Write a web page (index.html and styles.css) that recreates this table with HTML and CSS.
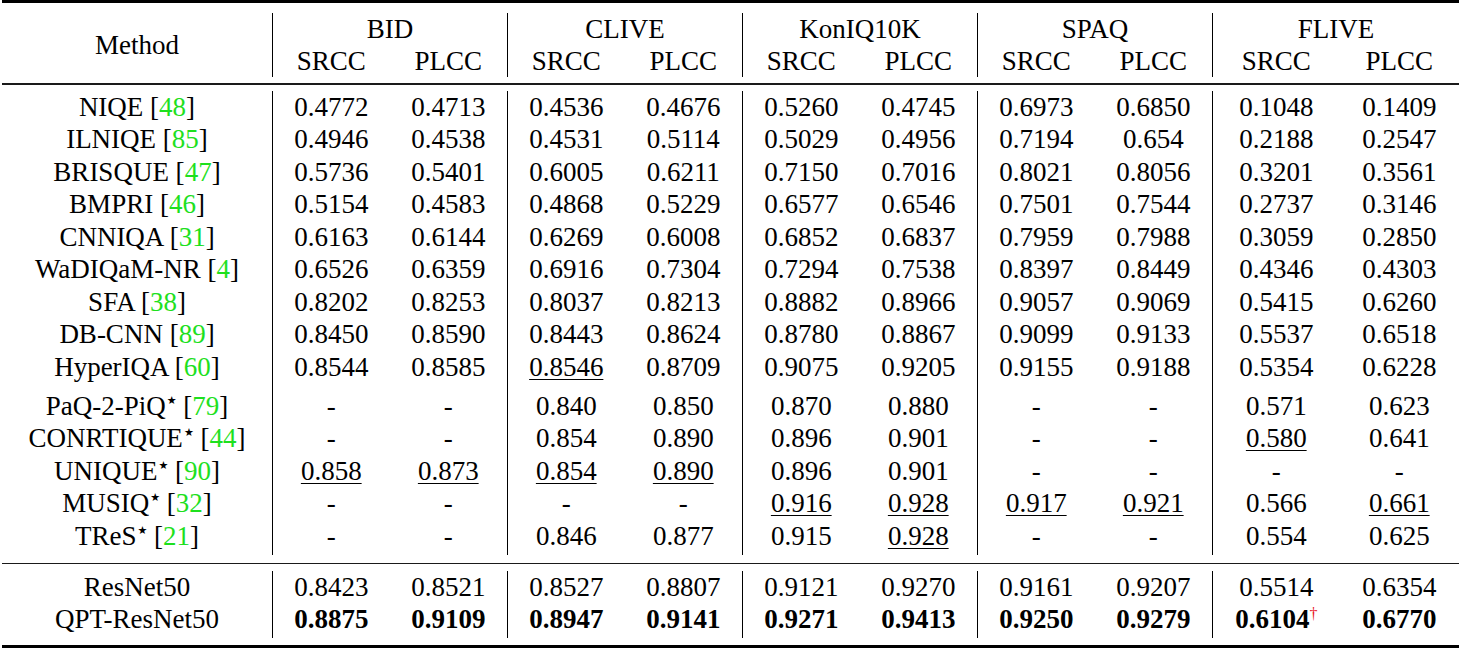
FILE: index.html
```html
<!DOCTYPE html>
<html lang="en">
<head>
<meta charset="utf-8">
<title>IQA results</title>
<link rel="stylesheet" href="styles.css">
</head>
<body>
<div class="wrap">
<table class="res">
  <colgroup>
    <col class="cm">
    <col class="cn"><col class="cn">
    <col class="cn"><col class="cn">
    <col class="cn"><col class="cn">
    <col class="cn"><col class="cn">
    <col class="cw"><col class="cl">
  </colgroup>
  <tbody>
    <tr class="rule thick"><td colspan="11"></td></tr>
    <tr class="gap g10"><td colspan="11"></td></tr>
    <tr class="hdr">
      <td rowspan="2">Method</td>
      <td colspan="2" class="sep">BID</td>
      <td colspan="2" class="sep">CLIVE</td>
      <td colspan="2" class="sep">KonIQ10K</td>
      <td colspan="2" class="sep">SPAQ</td>
      <td colspan="2" class="sep">FLIVE</td>
    </tr>
    <tr class="hdr">
      <td class="sep">SRCC</td><td>PLCC</td>
      <td class="sep">SRCC</td><td>PLCC</td>
      <td class="sep">SRCC</td><td>PLCC</td>
      <td class="sep">SRCC</td><td>PLCC</td>
      <td class="sep">SRCC</td><td>PLCC</td>
    </tr>
    <tr class="gap g6"><td colspan="11"></td></tr>
    <tr class="rule thin"><td colspan="11"></td></tr>
    <tr class="gap g6b"><td colspan="11"></td></tr>

    <tr class="row"><td>NIQE [<span class="cite">48</span>]</td><td class="sep">0.4772</td><td>0.4713</td><td class="sep">0.4536</td><td>0.4676</td><td class="sep">0.5260</td><td>0.4745</td><td class="sep">0.6973</td><td>0.6850</td><td class="sep">0.1048</td><td>0.1409</td></tr>
    <tr class="row"><td>ILNIQE [<span class="cite">85</span>]</td><td class="sep">0.4946</td><td>0.4538</td><td class="sep">0.4531</td><td>0.5114</td><td class="sep">0.5029</td><td>0.4956</td><td class="sep">0.7194</td><td>0.654</td><td class="sep">0.2188</td><td>0.2547</td></tr>
    <tr class="row"><td>BRISQUE [<span class="cite">47</span>]</td><td class="sep">0.5736</td><td>0.5401</td><td class="sep">0.6005</td><td>0.6211</td><td class="sep">0.7150</td><td>0.7016</td><td class="sep">0.8021</td><td>0.8056</td><td class="sep">0.3201</td><td>0.3561</td></tr>
    <tr class="row"><td>BMPRI [<span class="cite">46</span>]</td><td class="sep">0.5154</td><td>0.4583</td><td class="sep">0.4868</td><td>0.5229</td><td class="sep">0.6577</td><td>0.6546</td><td class="sep">0.7501</td><td>0.7544</td><td class="sep">0.2737</td><td>0.3146</td></tr>
    <tr class="row"><td>CNNIQA [<span class="cite">31</span>]</td><td class="sep">0.6163</td><td>0.6144</td><td class="sep">0.6269</td><td>0.6008</td><td class="sep">0.6852</td><td>0.6837</td><td class="sep">0.7959</td><td>0.7988</td><td class="sep">0.3059</td><td>0.2850</td></tr>
    <tr class="row"><td>WaDIQaM-NR [<span class="cite">4</span>]</td><td class="sep">0.6526</td><td>0.6359</td><td class="sep">0.6916</td><td>0.7304</td><td class="sep">0.7294</td><td>0.7538</td><td class="sep">0.8397</td><td>0.8449</td><td class="sep">0.4346</td><td>0.4303</td></tr>
    <tr class="row"><td>SFA [<span class="cite">38</span>]</td><td class="sep">0.8202</td><td>0.8253</td><td class="sep">0.8037</td><td>0.8213</td><td class="sep">0.8882</td><td>0.8966</td><td class="sep">0.9057</td><td>0.9069</td><td class="sep">0.5415</td><td>0.6260</td></tr>
    <tr class="row"><td>DB-CNN [<span class="cite">89</span>]</td><td class="sep">0.8450</td><td>0.8590</td><td class="sep">0.8443</td><td>0.8624</td><td class="sep">0.8780</td><td>0.8867</td><td class="sep">0.9099</td><td>0.9133</td><td class="sep">0.5537</td><td>0.6518</td></tr>
    <tr class="row tall"><td>HyperIQA [<span class="cite">60</span>]</td><td class="sep">0.8544</td><td>0.8585</td><td class="sep"><span class="u">0.8546</span></td><td>0.8709</td><td class="sep">0.9075</td><td>0.9205</td><td class="sep">0.9155</td><td>0.9188</td><td class="sep">0.5354</td><td>0.6228</td></tr>
    <tr class="row r2"><td>PaQ-2-PiQ<span class="star">★</span> [<span class="cite">79</span>]</td><td class="sep">-</td><td>-</td><td class="sep">0.840</td><td>0.850</td><td class="sep">0.870</td><td>0.880</td><td class="sep">-</td><td>-</td><td class="sep">0.571</td><td>0.623</td></tr>
    <tr class="row r2"><td>CONRTIQUE<span class="star">★</span> [<span class="cite">44</span>]</td><td class="sep">-</td><td>-</td><td class="sep">0.854</td><td>0.890</td><td class="sep">0.896</td><td>0.901</td><td class="sep">-</td><td>-</td><td class="sep"><span class="u">0.580</span></td><td>0.641</td></tr>
    <tr class="row r2"><td>UNIQUE<span class="star">★</span> [<span class="cite">90</span>]</td><td class="sep"><span class="u">0.858</span></td><td><span class="u">0.873</span></td><td class="sep"><span class="u">0.854</span></td><td><span class="u">0.890</span></td><td class="sep">0.896</td><td>0.901</td><td class="sep">-</td><td>-</td><td class="sep">-</td><td>-</td></tr>
    <tr class="row r2"><td>MUSIQ<span class="star">★</span> [<span class="cite">32</span>]</td><td class="sep">-</td><td>-</td><td class="sep">-</td><td>-</td><td class="sep"><span class="u">0.916</span></td><td><span class="u">0.928</span></td><td class="sep"><span class="u">0.917</span></td><td><span class="u">0.921</span></td><td class="sep">0.566</td><td><span class="u">0.661</span></td></tr>
    <tr class="row r2 last"><td>TReS<span class="star">★</span> [<span class="cite">21</span>]</td><td class="sep">-</td><td>-</td><td class="sep">0.846</td><td>0.877</td><td class="sep">0.915</td><td><span class="u">0.928</span></td><td class="sep">-</td><td>-</td><td class="sep">0.554</td><td>0.625</td></tr>

    <tr class="gap g8"><td colspan="11"></td></tr>
    <tr class="rule thin"><td colspan="11"></td></tr>
    <tr class="gap g6c"><td colspan="11"></td></tr>

    <tr class="row"><td>ResNet50</td><td class="sep">0.8423</td><td>0.8521</td><td class="sep">0.8527</td><td>0.8807</td><td class="sep">0.9121</td><td>0.9270</td><td class="sep">0.9161</td><td>0.9207</td><td class="sep">0.5514</td><td>0.6354</td></tr>
    <tr class="row bold last"><td>QPT-ResNet50</td><td class="sep">0.8875</td><td>0.9109</td><td class="sep">0.8947</td><td>0.9141</td><td class="sep">0.9271</td><td>0.9413</td><td class="sep">0.9250</td><td>0.9279</td><td class="sep">0.6104<span class="dag">†</span></td><td>0.6770</td></tr>

    <tr class="gap g7"><td colspan="11"></td></tr>
    <tr class="rule thick"><td colspan="11"></td></tr>
  </tbody>
</table>
</div>
</body>
</html>
```

FILE: styles.css
```css
html, body {
  margin: 0;
  padding: 0;
  background: #ffffff;
}

.wrap {
  padding-left: 2px;
}

.res {
  border-collapse: separate;
  border-spacing: 0;
  table-layout: fixed;
  width: 1457px;
  font-family: "Liberation Serif", "Times New Roman", serif;
  font-size: 27px;
  color: #000000;
}

.cm { width: 270px; }
.cn { width: 117.5px; }
.cw { width: 127.5px; }
.cl { width: 119.5px; }

.res td {
  padding: 0;
  text-align: center;
  white-space: nowrap;
  font-weight: normal;
}

.rule td,
.gap td {
  font-size: 0;
  line-height: 0;
}

.rule.thick td { height: 3px; background: #000000; }
.rule.thin td { height: 1.5px; background: #1a1a1a; }

.gap.g10 td { height: 10px; }
.gap.g6 td { height: 6px; }
.gap.g6b td { height: 6.2px; }
.gap.g8 td { height: 8px; }
.gap.g6c td { height: 6.5px; }
.gap.g7 td { height: 7px; }

.hdr td {
  height: 32px;
  line-height: 32px;
  vertical-align: middle;
}

.row td {
  height: 32.5px;
  line-height: 32.5px;
  vertical-align: top;
}

.row.r2 td {
  height: 32.6px;
  line-height: 32.6px;
}

.row.tall td {
  padding-bottom: 6.5px;
}

.row.last td {
  padding-bottom: 2.3px;
}

.row.bold td + td {
  font-weight: bold;
}

.sep {
  border-left: 1px solid #000000;
}

.cite {
  color: #1ee01e;
}

.u {
  text-decoration: underline;
  text-decoration-thickness: 1px;
  text-underline-offset: 3px;
}

.star {
  font-family: "DejaVu Sans", sans-serif;
  font-size: 11px;
  line-height: 0;
  vertical-align: 11px;
  margin-left: 1px;
}

.dag {
  color: #e8141e;
  font-weight: normal;
  font-size: 16px;
  line-height: 0;
  vertical-align: 9px;
}
```
